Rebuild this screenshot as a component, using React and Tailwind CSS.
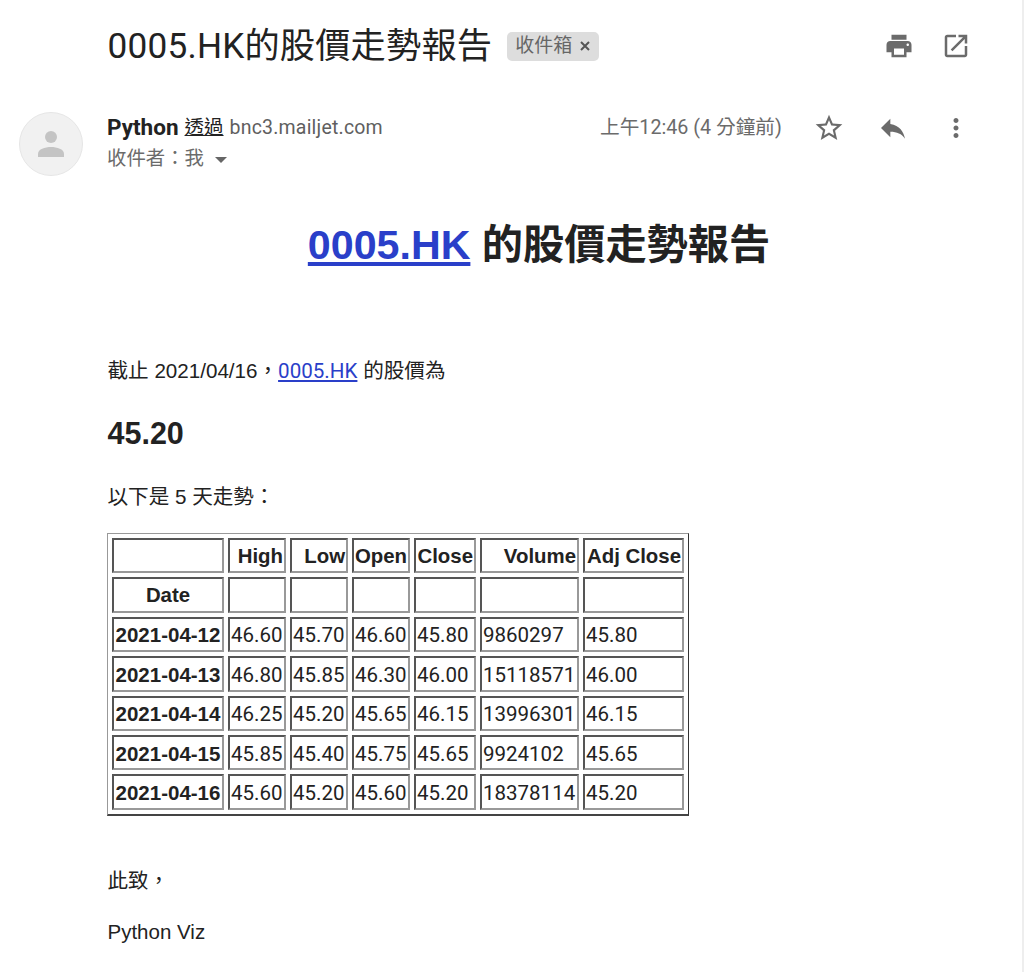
const sans = "font-['Liberation_Sans','Noto_Sans_CJK_TC',sans-serif]";
const robo = "font-['Roboto','Noto_Sans_CJK_TC',sans-serif]";
const widths = ["w-[112px]", "w-[58px]", "w-[58px]", "w-[58px]", "w-[62px]", "w-[99px]", "w-[101px]"];
const rows = [
  ["2021-04-12", "46.60", "45.70", "46.60", "45.80", "9860297", "45.80"],
  ["2021-04-13", "46.80", "45.85", "46.30", "46.00", "15118571", "46.00"],
  ["2021-04-14", "46.25", "45.20", "45.65", "46.15", "13996301", "46.15"],
  ["2021-04-15", "45.85", "45.40", "45.75", "45.65", "9924102", "45.65"],
  ["2021-04-16", "45.60", "45.20", "45.60", "45.20", "18378114", "45.20"],
];
const cell = "h-[35.4px] p-0 border-2 border-t-[#555] border-l-[#555] border-r-[#999] border-b-[#999]";

function Icon({ d, className }) {
  return (
    <svg viewBox="0 0 24 24" className={className} fill="#6b6b6b">
      <path d={d} />
    </svg>
  );
}

export default function App() {
  return (
    <div className={`relative w-[1024px] h-[972px] overflow-hidden bg-white border-r-2 border-[#eeeeee] text-[#222222] ${sans}`}>
      <div className="flex items-center h-[32px] mt-[30px] pl-[107.5px]">
        <h2 className={`text-[35.2px] leading-[32px] text-[#222222] font-normal tracking-[0.2px] ${robo}`}>0005.HK的股價走勢報告</h2>
        <span className={`ml-[15px] h-[29px] w-[92px] rounded-[5px] bg-[#dddddd] flex items-center pl-[8px] gap-[8px] text-[#666666] text-[19px] ${robo}`}>
          收件箱
          <svg viewBox="0 0 10 10" className="w-[10px] h-[10px]" stroke="#555" strokeWidth="2" fill="none"><path d="M1 1l8 8M9 1l-8 8" /></svg>
        </span>
        <div className="ml-auto mr-[51px] flex items-center gap-[27px]">
          <Icon className="w-[30px] h-[30px]" d="M19 8H5c-1.66 0-3 1.34-3 3v6h4v4h12v-4h4v-6c0-1.66-1.34-3-3-3zm-3 11H8v-5h8v5zm3-7c-.55 0-1-.45-1-1s.45-1 1-1 1 .45 1 1-.45 1-1 1zm-1-9H6v4h12V3z" />
          <Icon className="w-[30px] h-[30px]" d="M19 19H5V5h7V3H5c-1.11 0-2 .9-2 2v14c0 1.1.89 2 2 2h14c1.1 0 2-.9 2-2v-7h-2v7zM14 3v2h3.59l-9.83 9.83 1.41 1.41L19 6.41V10h2V3h-7z" />
        </div>
      </div>

      <div className="flex mt-[50px] pl-[19px]">
        <div className="w-[64px] h-[64px] rounded-full bg-[#f1f1f1] border border-[#e6e6e6] flex items-center justify-center shrink-0">
          <svg viewBox="0 0 26 28" className="w-[26px] h-[28px]" fill="#c4c4c4">
            <circle cx="13" cy="7" r="6" />
            <path d="M0 27v-3c0-5 7-7 13-7s13 2 13 7v3z" />
          </svg>
        </div>
        <div className="ml-[24px] flex-1 mt-[3px]">
          <div className={`flex items-center h-[26px] ${robo}`}>
            <b className="font-bold text-[#222222] text-[22.5px]">Python</b>
            <span className="ml-[6px] underline text-[#222222] text-[19.5px]">透過</span>
            <span className="ml-[6px] text-[#5f5f5f] text-[19.5px] tracking-[0.2px]">bnc3.mailjet.com</span>
            <span className="ml-auto text-[19.7px] text-[#6b6b6b] w-[199px] shrink-0 whitespace-nowrap">上午12:46 (4 分鐘前)</span>
            <div className="w-[223px] flex items-center pl-[14px] gap-[32px] shrink-0">
              <svg viewBox="0 0 24 24" className="w-[32px] h-[32px] shrink-0" fill="#6b6b6b"><path d="M22 9.24l-7.19-.62L12 2 9.19 8.63 2 9.24l5.46 4.73L5.82 21 12 17.27 18.18 21l-1.63-7.03L22 9.24zM12 15.4l-3.76 2.27 1-4.28-3.32-2.88 4.38-.38L12 6.1l1.71 4.04 4.38.38-3.32 2.88 1 4.28L12 15.4z" /></svg>
              <Icon className="w-[32px] h-[32px] shrink-0" d="M10 9V5l-7 7 7 7v-4.1c5 0 8.5 1.6 11 5.1-1-5-4-10-11-11z" />
              <Icon className="w-[30px] h-[30px] shrink-0" d="M12 8c1.1 0 2-.9 2-2s-.9-2-2-2-2 .9-2 2 .9 2 2 2zm0 2c-1.1 0-2 .9-2 2s.9 2 2 2 2-.9 2-2-.9-2-2-2zm0 6c-1.1 0-2 .9-2 2s.9 2 2 2 2-.9 2-2-.9-2-2-2z" />
            </div>
          </div>
          <div className={`flex items-center h-[24px] mt-[6px] text-[19.4px] text-[#6b6b6b] ${robo}`}>
            收件者：我
            <span className="ml-[11px] mt-[1px] w-0 h-0 border-x-[6px] border-x-transparent border-t-[6px] border-t-[#666666]"></span>
          </div>
        </div>
      </div>

      <div className="pl-[107px] pr-[51px] w-[1022px]">
        <h1 className="mt-[46px] text-center text-[41.2px] leading-[46px] font-bold text-[#222222]">
          <a className="text-[#2a3fc9] underline">0005.HK</a> 的股價走勢報告
        </h1>
        <p className="mt-[91px] ml-[0.5px] text-[20.6px] leading-[24px]">
          截止 2021/04/16，<a className={`text-[#2a3fc9] underline ${robo}`}>0005.HK</a> 的股價為
        </p>
        <h2 className="mt-[33px] ml-[0.5px] text-[30.5px] leading-[34px] font-bold">45.20</h2>
        <p className="mt-[35px] ml-[0.5px] text-[20.6px] leading-[24px]">以下是 5 天走勢：</p>
        <table className="mt-[24px] w-[581px] table-fixed border-separate border-spacing-[4px] border-t border-l border-r border-b-2 border-t-[#999] border-l-[#999] border-r-[#333] border-b-[#444]">
          <thead>
            <tr>
              {["", "High", "Low", "Open", "Close", "Volume", "Adj Close"].map((h, i) => (
                <th key={i} className={`${cell} ${widths[i]} text-right text-[20.4px] leading-[26px] font-bold pr-[1px]`}>{h}</th>
              ))}
            </tr>
            <tr>
              {["Date", "", "", "", "", "", ""].map((h, i) => (
                <th key={i} className={`${cell} text-center text-[20.4px] leading-[26px] font-bold`}>{h}</th>
              ))}
            </tr>
          </thead>
          <tbody>
            {rows.map((r) => (
              <tr key={r[0]}>
                {r.map((v, i) =>
                  i === 0 ? (
                    <th key={i} className={`${cell} pt-[2px] text-center text-[20.5px] leading-[26px] font-bold`}>{v}</th>
                  ) : (
                    <td key={i} className={`${cell} pt-[2px] text-left pl-[1px] text-[20.5px] leading-[26px] ${robo}`}>{v}</td>
                  )
                )}
              </tr>
            ))}
          </tbody>
        </table>
        <p className="mt-[53px] ml-[0.5px] text-[20.5px] leading-[24px]">此致，</p>
        <p className="mt-[27px] ml-[0.5px] text-[20.5px] leading-[24px]">Python Viz</p>
      </div>
    </div>
  );
}
